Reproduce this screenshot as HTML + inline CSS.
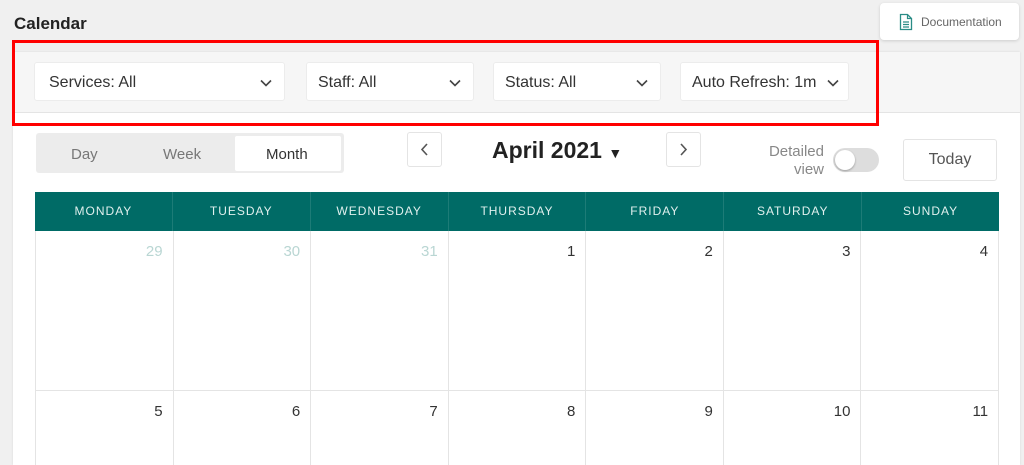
<!DOCTYPE html>
<html style="width:1024px;height:465px;overflow:hidden"><head><style>
*{box-sizing:border-box;margin:0;padding:0}
body{width:1024px;height:465px;background:#f0f0f0;font-family:"Liberation Sans",sans-serif;position:relative;overflow:hidden;color:#333}
.abs{position:absolute}
.title{left:14px;top:14px;font-size:17px;font-weight:bold;color:#222}
.doc{left:880px;top:3px;width:139px;height:37px;background:#fff;border-radius:4px;box-shadow:0 1px 3px rgba(0,0,0,.15);font-size:12px;color:#666;display:flex;align-items:center;padding-left:19px}
.panel{left:13px;top:52px;width:1007px;height:413px;background:#fff;box-shadow:0 0 2px rgba(0,0,0,.1)}
.bar{left:13px;top:52px;width:1007px;height:61px;background:#f6f6f6;border-bottom:1px solid #e4e4e4}
.sel{top:62px;height:39px;background:#fff;border:1px solid #ececec;border-radius:3px;font-size:16px;color:#333;display:flex;align-items:center;padding-left:14px;padding-top:2px}
.sel svg{position:absolute;right:12px;top:16px}
.red{left:12px;top:40px;width:867px;height:86px;border:3px solid #f00}
.seg{left:36px;top:133px;width:308px;height:40px;background:#ececec;border-radius:3px;font-size:15px}
.seg span{position:absolute;top:13px;color:#777}
.month{left:199px;top:3px;width:106px;height:35px;background:#fff;border-radius:2px}
.nav{top:132px;width:35px;height:35px;background:#fff;border:1px solid #e4e4e4;border-radius:3px}
.head{left:35px;top:192px;width:964px;height:39px;background:#006b66;display:flex}
.head div{flex:1;color:#e0f0ee;font-size:12px;letter-spacing:1px;text-align:center;line-height:39px;border-right:1px solid #1d7c77}
.grid{left:35px;top:231px;width:964px;height:234px;border-left:1px solid #e4e4e4;overflow:hidden}
.row{display:flex;height:160px;border-bottom:1px solid #e4e4e4}
.row div{flex:1;border-right:1px solid #e4e4e4;text-align:right;padding:12px 10px 0 0;font-size:15px;color:#333}
.row div.o{color:#b9d6d3}
</style></head><body>
<div class="abs title">Calendar</div>
<div class="abs doc"><svg width="14" height="18" viewBox="0 0 14 18" style="margin-right:8px"><path d="M1.5 1.5h7l4 4v11h-11z" fill="none" stroke="#2a8c86" stroke-width="1.3"/><path d="M8.5 1.5v4h4M4 9h6M4 11.5h6M4 14h6" fill="none" stroke="#2a8c86" stroke-width="1.2"/></svg>Documentation</div>
<div class="abs panel"></div>
<div class="abs bar"></div>
<div class="abs sel" style="left:34px;width:251px">Services: All<svg width="12" height="8" viewBox="0 0 12 8"><path d="M1 1.5l5 5 5-5" fill="none" stroke="#444" stroke-width="1.6"/></svg></div>
<div class="abs sel" style="left:306px;width:168px;padding-left:11px">Staff: All<svg width="12" height="8" viewBox="0 0 12 8"><path d="M1 1.5l5 5 5-5" fill="none" stroke="#444" stroke-width="1.6"/></svg></div>
<div class="abs sel" style="left:493px;width:168px;padding-left:11px">Status: All<svg width="12" height="8" viewBox="0 0 12 8"><path d="M1 1.5l5 5 5-5" fill="none" stroke="#444" stroke-width="1.6"/></svg></div>
<div class="abs sel" style="left:680px;width:169px;padding-left:11px">Auto Refresh: 1m<svg width="12" height="8" viewBox="0 0 12 8" style="right:9px"><path d="M1 1.5l5 5 5-5" fill="none" stroke="#444" stroke-width="1.6"/></svg></div>
<div class="abs red"></div>
<div class="abs seg"><div class="abs month"></div><span style="left:35px">Day</span><span style="left:127px">Week</span><span style="left:230px;color:#333">Month</span></div>
<div class="abs nav" style="left:407px"><svg width="35" height="35" viewBox="0 0 35 35" class="abs" style="left:-1px;top:-1px"><path d="M20 12l-5 5.5 5 5.5" fill="none" stroke="#555" stroke-width="1.6"/></svg></div>
<div class="abs" style="left:492px;top:137px;font-size:23px;font-weight:bold;color:#222">April 2021 <span style="font-size:14px">▼</span></div>
<div class="abs nav" style="left:666px"><svg width="35" height="35" viewBox="0 0 35 35" class="abs" style="left:-1px;top:-1px"><path d="M15 12l5 5.5-5 5.5" fill="none" stroke="#555" stroke-width="1.6"/></svg></div>
<div class="abs" style="left:750px;top:143px;width:74px;text-align:right;font-size:15px;color:#888;line-height:18px">Detailed<br>view</div>
<div class="abs" style="left:833px;top:148px;width:46px;height:24px;background:#ddd;border-radius:12px"><div class="abs" style="left:2px;top:2px;width:20px;height:20px;background:#fff;border-radius:50%;box-shadow:0 1px 2px rgba(0,0,0,.3)"></div></div>
<div class="abs" style="left:903px;top:139px;width:94px;height:42px;background:#fff;border:1px solid #e4e4e4;border-radius:3px;font-size:16px;color:#555;text-align:center;line-height:40px">Today</div>
<div class="abs head"><div>MONDAY</div><div>TUESDAY</div><div>WEDNESDAY</div><div>THURSDAY</div><div>FRIDAY</div><div>SATURDAY</div><div style="border:0">SUNDAY</div></div>
<div class="abs grid">
<div class="row"><div class="o">29</div><div class="o">30</div><div class="o">31</div><div>1</div><div>2</div><div>3</div><div>4</div></div>
<div class="row"><div>5</div><div>6</div><div>7</div><div>8</div><div>9</div><div>10</div><div>11</div></div>
</div>
</body></html>
